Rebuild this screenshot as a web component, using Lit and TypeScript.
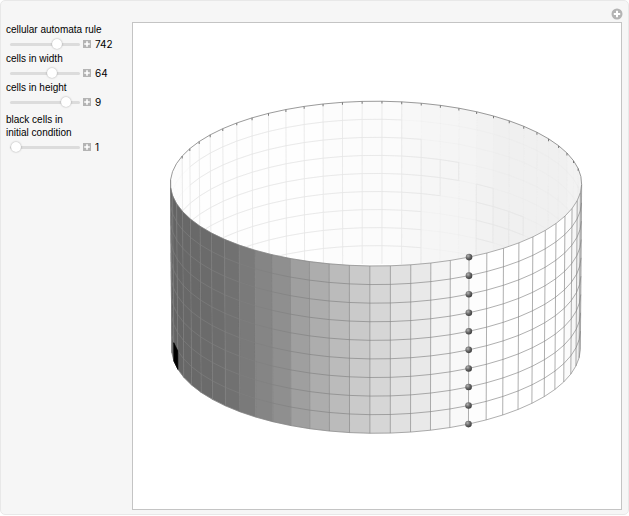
import { LitElement, html, css, svg } from "lit";
import { customElement, state } from "lit/decorators.js";

interface Control {
  id: string;
  label: string;
  min: number;
  max: number;
  value: number;
}

type Point = [number, number];

const COLUMNS = 64;
const ROWS = 9;
const STEP = (2 * Math.PI) / COLUMNS;
const PHASE = -0.3;
const SEAM = 5;
const SPREAD = 0.018;

/** Projects the corner at column edge i and row edge h onto the canvas. */
function project(i: number, h: number): Point {
  const t = h / ROWS;
  const angle = (i + PHASE) * STEP;
  const depth = Math.cos(angle);
  const w = 1 - SPREAD * depth;
  const rx = 205.2 - 1.3 * t;
  const ry = 82.2 + 2.4 * t;
  const cy = 158.8 + 164.5 * t;
  return [242.5 + (rx * Math.sin(angle)) / w, cy + (ry * depth) / w];
}

const fmt = (p: Point) => `${p[0].toFixed(2)},${p[1].toFixed(2)}`;
const path = (points: Point[]) => "M" + points.map(fmt).join("L");
const range = (from: number, to: number) =>
  Array.from({ length: to - from + 1 }, (_, k) => from + k);

const FRONT_TONES: Record<number, number> = {
  [-17]: 118, [-16]: 112, [-15]: 100, [-14]: 100, [-13]: 102, [-12]: 104,
  [-11]: 105, [-10]: 107, [-9]: 109, [-8]: 113, [-7]: 122, [-6]: 133,
  [-5]: 143, [-4]: 159, [-3]: 173, [-2]: 187, [-1]: 202, 0: 214, 1: 225,
  2: 233, 3: 243, 4: 249, 5: 253, 12: 251, 13: 246, 14: 238, 15: 222, 16: 200,
};

function backTone(column: number): number {
  if (column >= 45) return 252;
  if (column >= 35) return 254;
  if (column >= 33) return 252;
  if (column >= 31) return 251;
  if (column === 30) return 248;
  if (column === 29) return 246;
  if (column === 28) return 245;
  if (column === 27) return 244;
  if (column === 26) return 242;
  if (column >= 20) return 240;
  return 242;
}

const grey = (v: number) => `rgb(${v},${v},${v})`;

function wallColumn(column: number, tone: number) {
  const d = path([
    project(column, 0), project(column + 1, 0),
    project(column + 1, ROWS), project(column, ROWS),
  ]) + "Z";
  return svg`<path d=${d} fill=${grey(tone)} stroke=${grey(tone)} stroke-width="0.4"/>`;
}

/** Row edges of the far wall, as [row, first column edge, last column edge]. */
const BACK_ROWS: [number, number, number][] = [
  [1, 31, 44], [2, 30, 44], [3, 28, 45], [4, 28, 45], [5, 29, 46],
  [6, 30, 46], [7, 30, 46], [8, 30, 46],
  [4, 26, 27], [5, 24, 27], [6, 24, 27], [7, 26, 27],
];
const BACK_EDGES: [number, number, number][] = [
  ...range(31, 45).map((i): [number, number, number] => [i, 0, ROWS]),
  [30, 2, ROWS], [29, 3, 5], [28, 3, 4], [27, 4, 8], [26, 4, 7],
  [25, 5, 7], [24, 5, 6],
];

@customElement("wall-plot")
export class WallPlot extends LitElement {
  static styles = css`
    :host { display: block; }
    svg { display: block; width: 100%; height: auto; }
    .far { fill: none; stroke: #e6e6e6; stroke-width: 0.8; }
    .faint { fill: none; stroke: #c8c8c8; stroke-width: 1; opacity: 0.08; }
    .near { fill: none; stroke: #808080; stroke-opacity: 0.7; stroke-width: 0.9; }
    .rim { fill: none; stroke: #8e8e8e; stroke-width: 0.9; }
    .tick { stroke: #777777; stroke-width: 1; }
  `;

  render() {
    const back = range(16, 47);
    const front = range(-16, 15);
    const black = path([
      project(-14, 8), project(-13, 8), project(-13, 9), project(-14, 9),
    ]) + "Z";
    return html`
      <svg viewBox="0 0 487 485" role="img" aria-label="Cellular automaton on a cylinder">
        <defs>
          <radialGradient id="ball" cx="0.36" cy="0.32" r="0.7">
            <stop offset="0" stop-color="#b4b4b4" />
            <stop offset="0.5" stop-color="#6b6b6b" />
            <stop offset="1" stop-color="#3c3c3c" />
          </radialGradient>
        </defs>
        ${back.map((i) => wallColumn(i, backTone(i)))}
        ${range(1, 8).map(
          (h) => svg`<path class="faint" d=${path(range(17, 47).map((i) => project(i, h)))}/>`
        )}
        ${range(17, 30).map(
          (i) => svg`<path class="faint" d=${path([project(i, 0), project(i, ROWS)])}/>`
        )}
        ${BACK_ROWS.map(
          ([h, a, b]) => svg`<path class="far" d=${path(range(a, b).map((i) => project(i, h)))}/>`
        )}
        ${BACK_EDGES.map(
          ([i, a, b]) => svg`<path class="far" d=${path([project(i, a), project(i, b)])}/>`
        )}
        <path class="rim" d=${path(range(16, 48).map((i) => project(i, 0)))} />
        ${range(18, 45).map(
          (i) => svg`<path class="tick" d=${path([project(i, 0), project(i, 0.13)])}/>`
        )}
        ${front.map((i) => wallColumn(i, FRONT_TONES[i] ?? 255))}
        ${range(0, ROWS).map(
          (h) => svg`<path class="near" d=${path(range(-16, 16).map((i) => project(i, h)))}/>`
        )}
        ${range(-15, 16).map(
          (i) => svg`<path class="near" d=${path([project(i, 0), project(i, ROWS)])}/>`
        )}
        <path d=${black} fill="#000" stroke="#000" stroke-width="0.8" />
        ${range(0, ROWS).map((h) => {
          const [x, y] = project(SEAM, h);
          return svg`<circle cx=${x} cy=${y} r="3.3" fill="url(#ball)"/>`;
        })}
      </svg>
    `;
  }
}

@customElement("app-root")
export class AppRoot extends LitElement {
  static styles = css`
    :host {
      display: block;
      font-family: Inter, "Liberation Sans", sans-serif;
      font-size: 10px;
      line-height: 13px;
      color: #000;
    }
    .frame {
      box-sizing: border-box;
      padding-bottom: 4px;
      border: 1px solid #e8e8e8;
      border-radius: 5px;
      background: #f6f6f6;
    }
    .bar {
      display: flex;
      justify-content: flex-end;
      align-items: flex-end;
      height: 21px;
      padding: 0 5px 2px;
      box-sizing: border-box;
    }
    button {
      display: block;
      padding: 0;
      border: 0;
      background: none;
      line-height: 0;
    }
    .body {
      display: grid;
      grid-template-columns: 126px 1fr;
      align-items: start;
      padding: 0 6px 0 5px;
    }
    .controls {
      display: flex;
      flex-direction: column;
      padding-top: 1px;
    }
    .control label {
      display: block;
      white-space: pre-line;
      font-family: "Liberation Sans", sans-serif;
    }
    .control.tall { margin-top: 3px; }
    .row {
      display: flex;
      align-items: center;
      height: 16px;
      padding-left: 4px;
    }
    .row button { margin: 0 4px 0 3px; }
    input {
      appearance: none;
      width: 70px;
      height: 16px;
      margin: 0;
      background: none;
    }
    input::-webkit-slider-runnable-track {
      height: 3px;
      border-radius: 2px;
      background: #dcdcdc;
    }
    input::-webkit-slider-thumb {
      appearance: none;
      width: 10px;
      height: 10px;
      margin-top: -4px;
      border-radius: 50%;
      background: #fff;
      box-shadow: 0 0 2px rgba(0, 0, 0, 0.35);
    }
    .plot {
      border: 1px solid #c4c4c4;
      background: #fff;
    }
  `;

  @state() private controls: Control[] = [
    { id: "rule", label: "cellular automata rule", min: 0, max: 1050, value: 742 },
    { id: "width", label: "cells in width", min: 0, max: 104, value: 64 },
    { id: "height", label: "cells in height", min: 3, max: 10, value: 9 },
    { id: "black", label: "black cells in\ninitial condition", min: 0, max: 60, value: 1 },
  ];

  private change(id: string, event: Event) {
    const value = Number((event.target as HTMLInputElement).value);
    this.controls = this.controls.map((c) => (c.id === id ? { ...c, value } : c));
  }

  render() {
    return html`
      <div class="frame">
        <div class="bar">
          <button aria-label="Options">
            <svg width="12" height="12" viewBox="0 0 12 12">
              <circle cx="6" cy="6" r="5.5" fill="#b4b4b4" />
              <path d="M6 2.8V9.2M2.8 6H9.2" stroke="#fff" stroke-width="2" />
            </svg>
          </button>
        </div>
        <div class="body">
          <div class="controls">
            ${this.controls.map(
              (c) => html`
                <div class="control ${c.label.includes("\n") ? "tall" : ""}">
                  <label for=${c.id}>${c.label}</label>
                  <div class="row">
                    <input
                      id=${c.id}
                      type="range"
                      min=${c.min}
                      max=${c.max}
                      .value=${String(c.value)}
                      @input=${(e: Event) => this.change(c.id, e)}
                    />
                    <button aria-label="Show controls for ${c.label}">
                      <svg width="8" height="8" viewBox="0 0 8 8">
                        <rect width="8" height="8" fill="#b4b4b4" />
                        <path d="M4 1.2V6.8M1.2 4H6.8" stroke="#fff" stroke-width="1.6" />
                      </svg>
                    </button>
                    <output for=${c.id}>${c.value}</output>
                  </div>
                </div>
              `
            )}
          </div>
          <div class="plot"><wall-plot></wall-plot></div>
        </div>
      </div>
    `;
  }
}
